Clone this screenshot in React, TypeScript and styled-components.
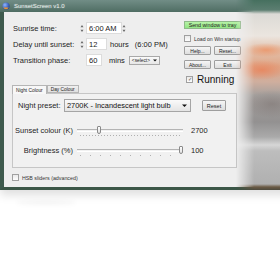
import React from "react";
import styled, { createGlobalStyle } from "styled-components";

const GlobalStyle = createGlobalStyle`
  html, body {
    margin: 0;
    padding: 0;
    background: #fff;
  }
  body {
    font-family: "Liberation Sans", Arial, sans-serif;
    color: #1a1a1a;
    white-space: nowrap;
  }
`;

const Stage = styled.div`
  position: relative;
  width: 280px;
  height: 270px;
  overflow: hidden;
  background: #fff;
`;

const Window = styled.div`
  width: 300px;
  display: flex;
  flex-direction: column;
  box-shadow: 0 5px 9px rgba(0, 0, 0, 0.13);
`;

const TitleBar = styled.div`
  height: 12px;
  display: flex;
  align-items: center;
  gap: 4px;
  padding-left: 2px;
  background: linear-gradient(#718d86, #4f6d63);
  color: #e9f0ed;
  font-size: 6px;
  text-shadow: 0 0 2px rgba(255, 255, 255, 0.4);
`;

const Frame = styled.div`
  height: 175px;
  border-left: 4px solid #3e5a4d;
  border-bottom: 3px solid #3b5647;
  background: #eeeeee;
  display: flex;
  flex-direction: column;
`;

const TopSection = styled.div`
  height: 64px;
  padding: 8px 0 0 9px;
  display: flex;
`;

const FormColumn = styled.div`
  width: 167px;
  display: flex;
  flex-direction: column;
`;

const FormRow = styled.div`
  height: 16px;
  display: flex;
  align-items: center;
  font-size: 7.5px;
`;

const Label = styled.span<{ $w?: number }>`
  width: ${(p) => p.$w ?? 67}px;
  flex: none;
  font-size: 7.5px;
  color: #1e1e1e;
`;

const SpinSlot = styled.span`
  width: 6px;
  height: 10px;
  flex: none;
  display: flex;
  align-items: center;
`;

const TextBox = styled.span<{ $w: number }>`
  width: ${(p) => p.$w}px;
  height: 12px;
  box-sizing: border-box;
  flex: none;
  background: #fff;
  border: 1px solid #dcdcdc;
  padding-left: 2px;
  display: flex;
  align-items: center;
  font-size: 7.5px;
`;

const Unit = styled.span<{ $ml: number }>`
  margin-left: ${(p) => p.$ml}px;
  font-size: 7.5px;
`;

const MiniSelect = styled.span`
  margin-left: 4px;
  width: 31px;
  height: 9px;
  box-sizing: border-box;
  border: 1px solid #a9a9a9;
  background: linear-gradient(#fbfbfb, #e6e6e6);
  display: flex;
  align-items: center;
  justify-content: space-between;
  padding: 0 2px 0 2px;
  font-size: 4.8px;
`;

const SideColumn = styled.div`
  width: 57px;
  margin-left: 4px;
  padding-top: 1px;
  display: flex;
  flex-direction: column;
`;

const TrayButton = styled.div`
  height: 11px;
  box-sizing: border-box;
  border: 1px solid #8fb98a;
  background: linear-gradient(#b6f2a6, #92e584);
  display: flex;
  align-items: center;
  justify-content: center;
  font-size: 5.3px;
  color: #222;
`;

const CheckRow = styled.div<{ $mt: number }>`
  margin-top: ${(p) => p.$mt}px;
  display: flex;
  align-items: center;
  gap: 3px;
  font-size: 5.2px;
  color: #333;
`;

const CheckBox = styled.span`
  width: 5px;
  height: 5px;
  flex: none;
  border: 1px solid #a0a0a0;
  background: linear-gradient(#eaeaea, #fdfdfd);
  display: flex;
  align-items: center;
  justify-content: center;
  font-size: 5px;
  color: #4a4a4a;
  line-height: 1;
`;

const ButtonGrid = styled.div<{ $mt: number }>`
  margin-top: ${(p) => p.$mt}px;
  display: grid;
  grid-template-columns: 1fr 1fr;
  gap: 3px;
`;

const SmallButton = styled.div<{ $h?: number }>`
  height: ${(p) => p.$h ?? 9}px;
  box-sizing: border-box;
  border: 1px solid #9e9e9e;
  border-radius: 1px;
  background: linear-gradient(#f6f6f6, #dddddd);
  display: flex;
  align-items: center;
  justify-content: center;
  font-size: 5px;
  color: #222;
`;

const RunningRow = styled.div`
  margin-top: 5px;
  margin-left: 2px;
  height: 10px;
  display: flex;
  align-items: center;
  gap: 4px;
  font-size: 10px;
  color: #111;
`;

const TabStrip = styled.div`
  margin-left: 8px;
  height: 9px;
  display: flex;
  align-items: flex-end;
`;

const Tab = styled.div<{ $active?: boolean }>`
  height: ${(p) => (p.$active ? 9 : 8)}px;
  box-sizing: border-box;
  padding: 0 3px;
  margin-bottom: ${(p) => (p.$active ? -1 : 0)}px;
  border: 1px solid #b5b5b5;
  border-bottom: ${(p) => (p.$active ? "none" : "1px solid #b5b5b5")};
  background: ${(p) => (p.$active ? "#f7f7f7" : "linear-gradient(#f0f0f0, #dfdfdf)")};
  display: flex;
  align-items: center;
  font-size: 4.8px;
  color: #222;
  position: relative;
  z-index: ${(p) => (p.$active ? 1 : 0)};
`;

const Panel = styled.div`
  margin-left: 8px;
  width: 225px;
  height: 75px;
  box-sizing: border-box;
  border: 1px solid #c6c6c6;
  background: #f1f1f1;
  display: flex;
  flex-direction: column;
`;

const PresetRow = styled.div`
  margin-top: 5px;
  padding-left: 5px;
  height: 13px;
  display: flex;
  align-items: center;
`;

const Select = styled.div`
  width: 127px;
  height: 13px;
  box-sizing: border-box;
  border: 1px solid #a5a5a5;
  background: linear-gradient(#fafafa, #e4e4e4);
  display: flex;
  align-items: center;
  justify-content: space-between;
  padding: 0 3px 0 2px;
  font-size: 7.4px;
  color: #111;
`;

const ResetButton = styled(SmallButton)`
  width: 24px;
  margin-left: 11px;
  font-size: 5.5px;
`;

const SliderRow = styled.div<{ $mt: number }>`
  margin-top: ${(p) => p.$mt}px;
  height: 14px;
  display: flex;
  align-items: center;
`;

const SliderLabel = styled.span`
  width: 60px;
  flex: none;
  text-align: right;
  font-size: 7.5px;
  color: #1e1e1e;
`;

const Track = styled.div`
  position: relative;
  margin-left: 4px;
  width: 106px;
  height: 14px;
  flex: none;
`;

const TrackLine = styled.div`
  margin-top: 6px;
  height: 1px;
  border-top: 1px solid #b4b4b4;
  border-bottom: 1px solid #fff;
`;

const Ticks = styled.div<{ $step: number }>`
  margin-top: 3px;
  margin-left: 3px;
  margin-right: 3px;
  height: 1px;
  background: repeating-linear-gradient(
    to right,
    #b0b0b0 0,
    #b0b0b0 1px,
    transparent 1px,
    transparent ${(p) => p.$step}px
  );
`;

const Thumb = styled.div`
  position: absolute;
  top: 3px;
  width: 4px;
  height: 8px;
  box-sizing: border-box;
  border: 1px solid #8a8a8a;
  border-radius: 1px 1px 2px 2px;
  background: linear-gradient(#fdfdfd, #e2e2e2);
`;

const SliderValue = styled.span`
  margin-left: 8px;
  font-size: 7.5px;
  color: #1e1e1e;
`;

const HsbRow = styled.div`
  margin: 6px 0 0 8px;
  display: flex;
  align-items: center;
  gap: 3px;
  font-size: 5.3px;
  color: #333;
`;

const Photo = styled.div`
  position: absolute;
  left: 236px;
  top: 0;
  width: 44px;
  height: 190px;
  -webkit-mask-image: linear-gradient(to right, transparent 0, #000 18px);
  mask-image: linear-gradient(to right, transparent 0, #000 18px);
  background:
    radial-gradient(ellipse 22px 7px at 30px 50px, rgba(236, 146, 100, 0.8), transparent),
    radial-gradient(ellipse 24px 10px at 26px 70px, rgba(232, 132, 92, 0.85), transparent),
    radial-gradient(ellipse 28px 14px at 36px 104px, rgba(120, 110, 108, 0.5), transparent),
    linear-gradient(
      #46705f 0,
      #5c7e71 10px,
      #dcdad6 14px,
      #ebe5df 36px,
      #e2c0aa 50px,
      #e0a687 66px,
      #cfae9e 82px,
      #a6a19e 95px,
      #939191 122px,
      #aaaaaa 137px,
      #d6d6d6 145px,
      #bdbdbd 151px,
      #b0b0b0 184px,
      #6b5a44 187px,
      #4d4a3e 190px
    );
`;

const Reflection = styled.div`
  position: absolute;
  left: 16px;
  top: 200px;
  width: 60px;
  height: 5px;
  border-radius: 50%;
  background: rgba(0, 0, 0, 0.04);
  filter: blur(2px);
`;

const AppIcon = () => (
  <svg width="8" height="8" viewBox="0 0 8 8">
    <defs>
      <radialGradient id="ic" cx="0.35" cy="0.35" r="0.7">
        <stop offset="0" stopColor="#8fb6ff" />
        <stop offset="1" stopColor="#1c3f9c" />
      </radialGradient>
    </defs>
    <circle cx="4" cy="4" r="3.6" fill="url(#ic)" />
    <path d="M1.2 5.6 A3.2 3.2 0 0 0 6.8 5.6 Z" fill="#f0962e" />
  </svg>
);

const Spin = () => (
  <SpinSlot>
    <svg width="4" height="9" viewBox="0 0 4 9">
      <path d="M0.5 3.2 L2 1 L3.5 3.2 Z" fill="#6a6a6a" />
      <path d="M0.5 5.8 L2 8 L3.5 5.8 Z" fill="#6a6a6a" />
    </svg>
  </SpinSlot>
);

const DropArrow = ({ size }: { size: number }) => (
  <svg width={size} height={size / 2 + 1} viewBox="0 0 6 4">
    <path d="M0 0.5 L6 0.5 L3 3.5 Z" fill="#111" />
  </svg>
);

const Slider = ({ pos, step }: { pos: number; step: number }) => (
  <Track>
    <TrackLine />
    <Ticks $step={step} />
    <Thumb style={{ left: pos }} />
  </Track>
);

export default function App() {
  return (
    <Stage>
      <GlobalStyle />
      <Window>
        <TitleBar>
          <AppIcon />
          <span>SunsetScreen v1.0</span>
        </TitleBar>
        <Frame>
          <TopSection>
            <FormColumn>
              <FormRow>
                <Label>Sunrise time:</Label>
                <Spin />
                <TextBox $w={36}>6:00 AM</TextBox>
                <Spin />
              </FormRow>
              <FormRow>
                <Label>Delay until sunset:</Label>
                <Spin />
                <TextBox $w={21}>12</TextBox>
                <Unit $ml={3}>hours</Unit>
                <Unit $ml={6}>(6:00 PM)</Unit>
              </FormRow>
              <FormRow>
                <Label $w={73}>Transition phase:</Label>
                <TextBox $w={16}>60</TextBox>
                <Unit $ml={7}>mins</Unit>
                <MiniSelect>
                  <span>&lt;select&gt;</span>
                  <DropArrow size={4} />
                </MiniSelect>
              </FormRow>
            </FormColumn>
            <SideColumn>
              <TrayButton>Send window to tray</TrayButton>
              <CheckRow $mt={6}>
                <CheckBox />
                <span>Load on Win startup</span>
              </CheckRow>
              <ButtonGrid $mt={4}>
                <SmallButton>Help...</SmallButton>
                <SmallButton>Reset...</SmallButton>
              </ButtonGrid>
              <ButtonGrid $mt={5}>
                <SmallButton>About...</SmallButton>
                <SmallButton>Exit</SmallButton>
              </ButtonGrid>
              <RunningRow>
                <CheckBox>✓</CheckBox>
                <span>Running</span>
              </RunningRow>
            </SideColumn>
          </TopSection>
          <TabStrip>
            <Tab $active>Night Colour</Tab>
            <Tab>Day Colour</Tab>
          </TabStrip>
          <Panel>
            <PresetRow>
              <Label $w={46}>Night preset:</Label>
              <Select>
                <span>2700K - Incandescent light bulb</span>
                <DropArrow size={5} />
              </Select>
              <ResetButton $h={11}>Reset</ResetButton>
            </PresetRow>
            <SliderRow $mt={11}>
              <SliderLabel>Sunset colour (K)</SliderLabel>
              <Slider pos={20} step={3} />
              <SliderValue>2700</SliderValue>
            </SliderRow>
            <SliderRow $mt={6}>
              <SliderLabel>Brightness (%)</SliderLabel>
              <Slider pos={102} step={10} />
              <SliderValue>100</SliderValue>
            </SliderRow>
          </Panel>
          <HsbRow>
            <CheckBox />
            <span>HSB sliders (advanced)</span>
          </HsbRow>
        </Frame>
      </Window>
      <Photo />
      <Reflection />
    </Stage>
  );
}
